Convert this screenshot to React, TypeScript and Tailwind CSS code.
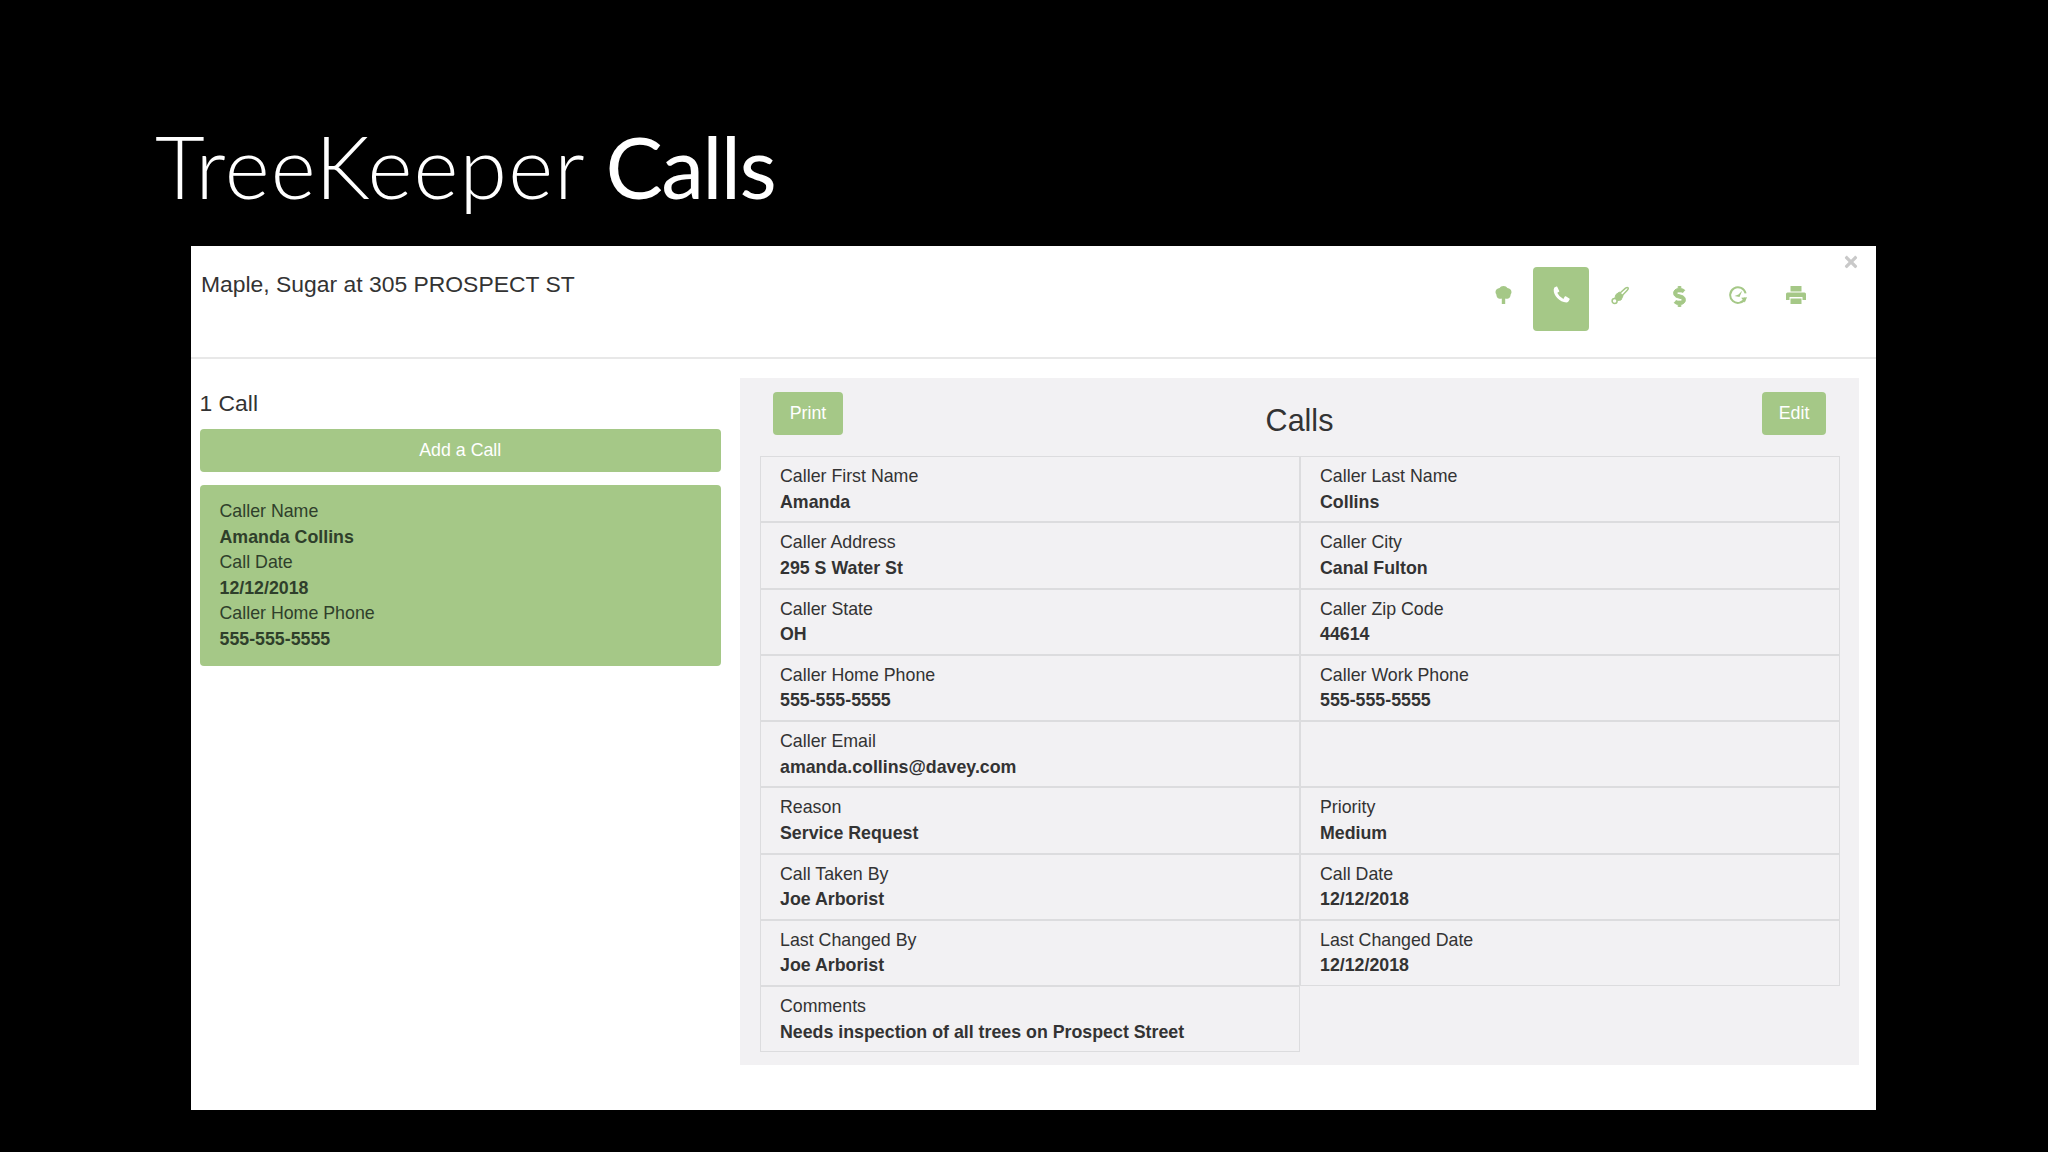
import { FaDollarSign, FaTimes } from "react-icons/fa";

function TreeIcon() {
  return (
    <svg width="17" height="18" viewBox="0 0 17 18" fill="#a5c887" className="translate-x-[1px]">
      <path d="M8.5 0c1.9 0 3.2 0.8 3.9 2 2.3 0.2 4.1 1.9 4.1 4 0 1.2-0.5 2-1 2.7 0.3 2.3-1.7 4.2-4 4.1-0.5 0-1-0.1-1.3-0.3V18H6.8v-5.5c-0.4 0.2-0.8 0.3-1.3 0.3C3.2 12.9 1.2 11 1.500 8.700 1 8 0.500 7.200 0.500 6c0-2.100 1.800-3.800 4.100-4C5.300 0.800 6.600 0 8.500 0z" />
    </svg>
  );
}

function PhoneIcon() {
  return (
    <svg width="18" height="18" viewBox="0 0 18 18" fill="none" stroke="#fff" strokeLinecap="round">
      <path d="M3.200 3.500C3 8.500 8 14.500 14.500 15" strokeWidth="3" />
      <path d="M2.800 2.200L4.700 1.200L6.600 5.200L4.500 6.500Z" fill="#fff" strokeWidth="1.400" strokeLinejoin="round" />
      <path d="M12.200 12.800L13.400 10.900L17 13.200L15.600 15.500Z" fill="#fff" strokeWidth="1.400" strokeLinejoin="round" />
    </svg>
  );
}

function SawIcon() {
  return (
    <svg width="18" height="19" viewBox="0 0 18 19" fill="none" stroke="#a5c887">
      <path d="M8.500 7.500L14.500 2.200Q16.200 1 17 1.800Q17.700 2.800 16.300 4.300L10.800 10Z" strokeWidth="1.500" />
      <path d="M5 8.500L8.500 6L12 9.800L10 14L6.500 14.500L4 11.500Z" fill="#a5c887" strokeWidth="1" />
      <circle cx="3.600" cy="15" r="2.500" strokeWidth="1.500" />
    </svg>
  );
}

function ClockIcon() {
  return (
    <svg width="18" height="18" viewBox="0 0 18 18" fill="none" stroke="#a5c887" strokeWidth="2">
      <path d="M16.200 12A7.800 7.800 0 1 1 16.600 7.400" />
      <path d="M5.500 10L9.500 8.500L13.200 4.800L10.500 11Z" fill="#a5c887" stroke="none" />
      <path d="M12.200 11.800L18 11.200L15.800 16.600Z" fill="#a5c887" stroke="none" />
    </svg>
  );
}

function PrintIcon() {
  return (
    <svg width="20" height="18" viewBox="0 0 20 18" fill="#a5c887" className="-translate-x-[1px]">
      <path d="M4.500 0H15.500V5.500H4.500Z" />
      <path d="M1.500 6.500H18.500A1.500 1.500 0 0 1 20 8V14H16.500V11H3.500V14H0V8A1.500 1.500 0 0 1 1.500 6.500Z" />
      <path d="M4.500 12.500H15.500V18H4.500Z" />
    </svg>
  );
}

function Icon({ children, active }: { children: React.ReactNode; active?: boolean }) {
  return (
    <div className={`flex h-[64px] w-[56px] justify-center rounded-[4px] pt-[19px] ${active ? "bg-[#a5c887]" : "text-[#a5c887]"}`}>
      {children}
    </div>
  );
}

function Cell({ label, value }: { label?: string; value?: string }) {
  return (
    <div className="h-[66.25px] border border-[#dcdcde] px-[19px] pt-[7px] leading-[25.6px]">
      <div>{label}</div>
      <div className="font-bold">{value}</div>
    </div>
  );
}

const rows: { label?: string; value?: string }[] = [
  { label: "Caller First Name", value: "Amanda" },
  { label: "Caller Last Name", value: "Collins" },
  { label: "Caller Address", value: "295 S Water St" },
  { label: "Caller City", value: "Canal Fulton" },
  { label: "Caller State", value: "OH" },
  { label: "Caller Zip Code", value: "44614" },
  { label: "Caller Home Phone", value: "555-555-5555" },
  { label: "Caller Work Phone", value: "555-555-5555" },
  { label: "Caller Email", value: "amanda.collins@davey.com" },
  { label: "", value: "" },
  { label: "Reason", value: "Service Request" },
  { label: "Priority", value: "Medium" },
  { label: "Call Taken By", value: "Joe Arborist" },
  { label: "Call Date", value: "12/12/2018" },
  { label: "Last Changed By", value: "Joe Arborist" },
  { label: "Last Changed Date", value: "12/12/2018" },
  { label: "Comments", value: "Needs inspection of all trees on Prospect Street" },
];

export default function App() {
  return (
    <div className="h-[1152px] w-[2048px] overflow-hidden bg-black pl-[191px] font-['Liberation_Sans',sans-serif] text-[17.8px] text-[#333]">
      <h1 className="ml-[-36px] h-[246px] pt-[123px] font-['Lato',sans-serif] text-[86px] leading-[1] font-light tracking-[1.15px] text-white">
        TreeKeeper <span className="ml-[-3px] font-normal tracking-[-1.7px]">Calls</span>
      </h1>
      <div className="relative h-[864px] w-[1685px] bg-white">
        <button className="absolute top-[7px] right-[16px] text-[#c9c9c9]" aria-label="Close">
          <FaTimes size={18} />
        </button>
        <header className="flex h-[113px] justify-between border-b-2 border-[#e8e8e8] pt-[21px] pr-[51px] pl-[10px]">
          <div className="pt-[2px] text-[22.9px] leading-[30px]">Maple, Sugar at 305 PROSPECT ST</div>
          <div className="flex gap-[3px]">
            <Icon><TreeIcon /></Icon>
            <Icon active><PhoneIcon /></Icon>
            <Icon><SawIcon /></Icon>
            <Icon><FaDollarSign size={21} className="stroke-[24px]" /></Icon>
            <Icon><ClockIcon /></Icon>
            <Icon><PrintIcon /></Icon>
          </div>
        </header>
        <div className="flex gap-[19px] pt-[19px] pr-[17px] pl-[8.5px]">
          <aside className="w-[521.5px]">
            <div className="pt-[10px] text-[22.9px] leading-[30px]">1 Call</div>
            <button className="mt-[11px] h-[43px] w-full rounded-[4px] bg-[#a5c887] text-white">Add a Call</button>
            <div className="mt-[13px] h-[181px] rounded-[4px] bg-[#a5c887] px-[20px] pt-[14px] leading-[25.6px] text-[#2f3f2b]">
              <div>Caller Name</div>
              <div className="font-bold">Amanda Collins</div>
              <div>Call Date</div>
              <div className="font-bold">12/12/2018</div>
              <div>Caller Home Phone</div>
              <div className="font-bold">555-555-5555</div>
            </div>
          </aside>
          <main className="h-[687px] flex-1 bg-[#f2f1f3] pt-[14px] pr-[19px] pl-[20px]">
            <div className="flex h-[64px] items-start pr-[14px] pl-[13px]">
              <div className="flex-1">
                <button className="h-[43px] w-[70px] rounded-[4px] bg-[#a5c887] text-white">Print</button>
              </div>
              <div className="pt-[8px] text-[30.5px] leading-[40px]">Calls</div>
              <div className="flex flex-1 justify-end">
                <button className="h-[43px] w-[64px] rounded-[4px] bg-[#a5c887] text-white">Edit</button>
              </div>
            </div>
            <div className="grid grid-cols-2">
              {rows.map((r, i) => (
                <Cell key={i} label={r.label} value={r.value} />
              ))}
            </div>
          </main>
        </div>
      </div>
    </div>
  );
}
